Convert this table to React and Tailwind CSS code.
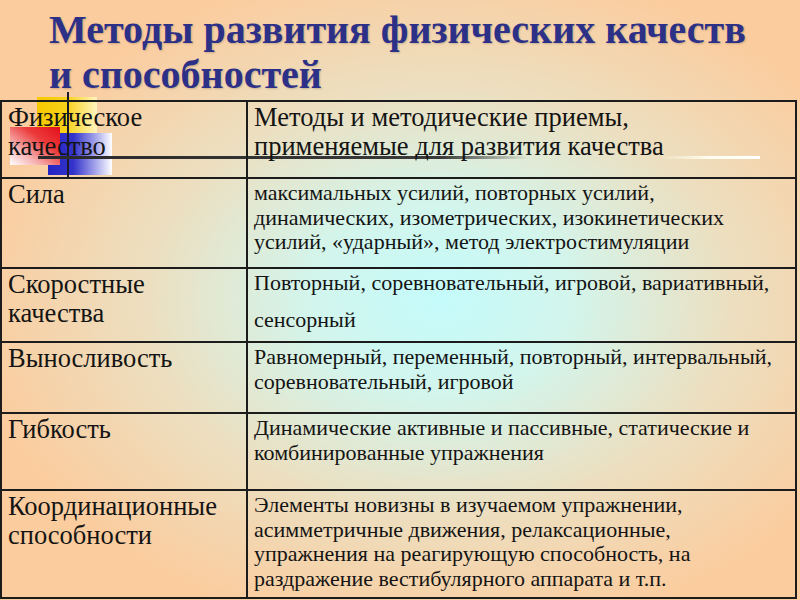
const rows = [
  {
    h: 'h-[90px]',
    left: ['Сила'],
    right: [
      'максимальных усилий, повторных усилий,',
      'динамических, изометрических, изокинетических',
      'усилий, «ударный», метод электростимуляции',
    ],
  },
  {
    h: 'h-[74px]',
    left: ['Скоростные', 'качества'],
    right: ['Повторный, соревновательный, игровой, вариативный,'],
    extra: 'сенсорный',
  },
  {
    h: 'h-[71px]',
    left: ['Выносливость'],
    right: [
      'Равномерный, переменный, повторный, интервальный,',
      'соревновательный, игровой',
    ],
  },
  {
    h: 'h-[77px]',
    left: ['Гибкость'],
    right: [
      'Динамические активные и пассивные, статические и',
      'комбинированные упражнения',
    ],
  },
  {
    h: 'h-[110px] border-b-2',
    left: ['Координационные', 'способности'],
    right: [
      'Элементы новизны в изучаемом упражнении,',
      'асимметричные движения, релаксационные,',
      'упражнения на реагирующую способность, на',
      'раздражение вестибулярного аппарата и т.п.',
    ],
  },
];

const Lines = ({ lines }) =>
  lines.map((l) => (
    <div key={l} className="whitespace-nowrap">
      {l}
    </div>
  ));

export default function App() {
  return (
    <div className="relative w-[800px] h-[600px] overflow-hidden font-['Liberation_Serif'] text-[#141414] bg-[radial-gradient(ellipse_470px_340px_at_440px_300px,#c4fbfb_0%,#d3f5ec_28%,#ecdfc0_62%,#fbcc9e_100%)]">
      {/* decoration behind the header cell */}
      <div className="absolute left-[37px] top-[97px] w-[60px] h-[44px] bg-[linear-gradient(to_right,#f6c800_0%,#f8d21a_50%,#fff4c0_100%)]" />
      <div className="absolute left-[48px] top-[133px] w-[64px] h-[42px] bg-[linear-gradient(to_right,#2424c4_0%,#3434cc_40%,#a8a8ec_75%,#ffffff_100%)]" />
      <div className="absolute left-[10px] top-[127px] w-[50px] h-[38px] bg-[linear-gradient(to_bottom_left,#e4101c_0%,#ec3a3a_35%,#f6b0b0_70%,#ffffff_100%)]" />
      <div className="absolute left-[67px] top-[92px] w-[2px] h-[86px] bg-[#1a1a2a]" />
      <div className="absolute left-[38px] top-[156px] w-[722px] h-[3px] bg-[linear-gradient(to_right,#2a2a2a_0%,#3a3a3a_56%,#46464600_68%,#ffffff00_86%,#fffdf0_93%,#ffffff_100%)]" />

      <div className="relative z-10">
        <h1 className="pl-[49px] pt-[7px] h-[100px] text-[40px] leading-[45px] font-bold text-[#2d3087] [text-shadow:1px_1px_2px_#00000030]">
          Методы развития физических качеств
          <br />
          и способностей
        </h1>

        <div className="w-[797px] border-l-2 border-r-2 border-[#1c1c1c]">
          <div className="grid grid-cols-[246px_1fr] h-[77px] border-t-2 border-[#1c1c1c] text-[26.5px] leading-[29px]">
            <div className="border-r-2 border-[#1c1c1c] pl-[6px] pt-[1px]">
              <Lines lines={['Физическое', 'качество']} />
            </div>
            <div className="pl-[6px] pt-[1px]">
              <Lines lines={['Методы и методические приемы,', 'применяемые для развития качества']} />
            </div>
          </div>

          {rows.map((r) => (
            <div
              key={r.left[0]}
              className={`grid grid-cols-[246px_1fr] border-t-2 border-[#1c1c1c] ${r.h}`}
            >
              <div className="border-r-2 border-[#1c1c1c] pl-[6px] pt-[1px] text-[26.5px] leading-[29px]">
                <Lines lines={r.left} />
              </div>
              <div className="pl-[6px] pt-[2px] text-[22px] leading-[24.5px]">
                <Lines lines={r.right} />
                {r.extra && <div className="mt-[12px]">{r.extra}</div>}
              </div>
            </div>
          ))}
        </div>
      </div>
    </div>
  );
}
